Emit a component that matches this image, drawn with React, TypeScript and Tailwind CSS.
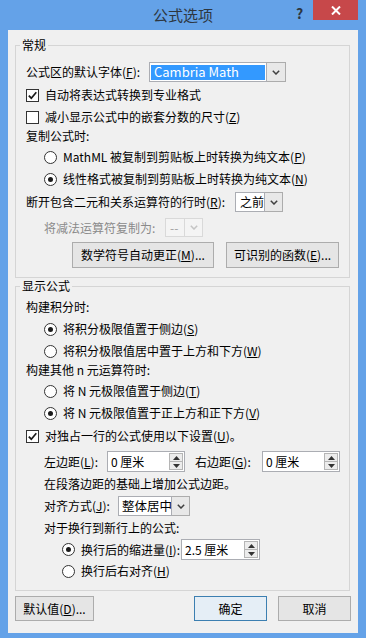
import type { ReactNode } from 'react';

function Chevron({ disabled }: { disabled?: boolean }) {
  return (
    <svg width="8" height="5" viewBox="0 0 8 5">
      <path d="M0.8 0.8 L4 4 L7.2 0.8" fill="none" stroke={disabled ? '#c4c4c4' : '#404040'} strokeWidth="1.5" />
    </svg>
  );
}

function Check({ checked, children }: { checked?: boolean; children: ReactNode }) {
  return (
    <div className="flex items-center h-[22px]">
      <span className="w-[13px] h-[13px] border border-[#333333] bg-white flex items-center justify-center shrink-0">
        {checked && (
          <svg width="11" height="11" viewBox="0 0 11 11">
            <path d="M1.8 5.6 L4.3 8.2 L9.3 2.2" fill="none" stroke="#1a1a1a" strokeWidth="1.7" />
          </svg>
        )}
      </span>
      <span className="ml-[6px]">{children}</span>
    </div>
  );
}

function Radio({ checked, children, className = '' }: { checked?: boolean; children: ReactNode; className?: string }) {
  return (
    <div className={`flex items-center ${className}`}>
      <span className="w-[13px] h-[13px] rounded-full border border-[#333333] bg-white flex items-center justify-center shrink-0">
        {checked && <span className="w-[5px] h-[5px] rounded-full bg-[#1a1a1a]" />}
      </span>
      <span className="ml-[6px]">{children}</span>
    </div>
  );
}

function Combo({ className, children, disabled, arrow = 'w-[18px]' }: { className: string; children: ReactNode; disabled?: boolean; arrow?: string }) {
  return (
    <div className={`flex h-full ${className}`}>
      <div className={`flex-1 min-w-0 flex items-center border overflow-hidden ${disabled ? 'border-[#d9d9d9] bg-[#f4f4f4] text-[#a0a0a0]' : 'border-[#abadb3] bg-white'}`}>
        {children}
      </div>
      <div className={`${arrow} shrink-0 flex items-center justify-center border border-l-0 ${disabled ? 'border-[#d9d9d9] bg-[#f4f4f4]' : 'border-[#acacac] bg-[#e8e8e8]'}`}>
        <Chevron disabled={disabled} />
      </div>
    </div>
  );
}

function Spin({ className, children }: { className: string; children: ReactNode }) {
  return (
    <div className={`flex h-full border border-[#abadb3] bg-white ${className}`}>
      <div className="flex-1 flex items-center pl-[3px]">{children}</div>
      <div className="w-[15px] flex flex-col py-[1px] pr-[1px]">
        <div className="flex-1 flex items-center justify-center bg-[#ececec] border border-[#b5b5b5]">
          <svg width="7" height="4" viewBox="0 0 7 4">
            <path d="M0 4 L3.5 0 L7 4Z" fill="#333333" />
          </svg>
        </div>
        <div className="flex-1 flex items-center justify-center bg-[#ececec] border border-t-0 border-[#b5b5b5]">
          <svg width="7" height="4" viewBox="0 0 7 4">
            <path d="M0 0 L3.5 4 L7 0Z" fill="#333333" />
          </svg>
        </div>
      </div>
    </div>
  );
}

function Btn({ className, children, primary }: { className: string; children: ReactNode; primary?: boolean }) {
  return (
    <div
      className={`flex items-center justify-center h-full border ${
        primary ? 'border-[#3c7fb1] bg-[#e5eef6]' : 'border-[#acacac] bg-[#e5e5e5]'
      } ${className}`}
    >
      {children}
    </div>
  );
}

export default function App() {
  return (
    <div className="w-[366px] h-[638px] bg-[#64a2e8] flex flex-col font-['Noto_Sans_CJK_SC',sans-serif] text-[12px] leading-[16px] text-black whitespace-nowrap select-none">
      {/* title bar */}
      <div className="h-[30px] shrink-0 relative flex items-center justify-center">
        <span className="text-[15px] text-[#2d3640]">公式选项</span>
        <span className="absolute left-[296px] top-[5px] text-[14px] font-bold text-[#2d3640]">?</span>
        <div className="absolute left-[313px] top-0 w-[45px] h-[20px] bg-[#c7484a] flex items-center justify-center">
          <svg width="10" height="9" viewBox="0 0 10 9">
            <path d="M1 0.5 L9 8.5 M9 0.5 L1 8.5" stroke="#ffffff" strokeWidth="2" />
          </svg>
        </div>
      </div>

      {/* client area */}
      <div className="mx-[8px] mb-[5px] flex-1 bg-[#f0f0f0] pt-[7px] px-[7px] flex flex-col">
        <fieldset className="border border-[#d5d5d5] mr-[1px] pl-[4px] pr-[4px] pt-[9px] pb-[9px] min-w-0">
          <legend className="px-[2px] leading-[16px]">常规</legend>
          <div className="pl-[6px] flex flex-col">
            <div className="flex items-center h-[20px]">
              <span className="w-[123px]">公式区的默认字体(<u>F</u>):</span>
              <Combo className="w-[137px]" arrow="w-[19px]">
                <div className="m-[1px] h-[15px] flex-1 bg-[#3399ff] text-white flex items-center pl-[3px] text-[13px]">Cambria Math</div>
              </Combo>
            </div>
            <div className="mt-[2px]">
              <Check checked>自动将表达式转换到专业格式</Check>
            </div>
            <Check>减小显示公式中的嵌套分数的尺寸(<u>Z</u>)</Check>
            <div className="h-[16px] flex items-center">复制公式时:</div>
            <Radio className="mt-[2px] h-[22px] pl-[18px]">MathML 被复制到剪贴板上时转换为纯文本(<u>P</u>)</Radio>
            <Radio checked className="h-[22px] pl-[18px]">线性格式被复制到剪贴板上时转换为纯文本(<u>N</u>)</Radio>
            <div className="mt-[2px] flex items-center h-[20px]">
              <span className="w-[209px]">断开包含二元和关系运算符的行时(<u>R</u>):</span>
              <Combo className="w-[48px]">
                <span className="pl-[4px]">之前</span>
              </Combo>
            </div>
            <div className="mt-[6px] flex items-center h-[19px] pl-[18px]">
              <span className="w-[121px] text-[#8a8a8a]">将减法运算符复制为:</span>
              <Combo className="w-[38px]" disabled>
                <span className="pl-[4px]">--</span>
              </Combo>
            </div>
            <div className="mt-[5px] flex h-[26px] pl-[46px] gap-[12px]">
              <Btn className="w-[142px]">数学符号自动更正(<u>M</u>)...</Btn>
              <Btn className="w-[113px]">可识别的函数(<u>E</u>)...</Btn>
            </div>
          </div>
        </fieldset>

        <fieldset className="border border-[#d5d5d5] mr-[1px] pl-[4px] pr-[4px] pt-[3px] pb-[8px] min-w-0">
          <legend className="px-[2px] leading-[16px]">显示公式</legend>
          <div className="pl-[6px] flex flex-col">
            <div className="h-[20px] flex items-center">构建积分时:</div>
            <Radio checked className="mt-[1px] h-[22px] pl-[18px]">将积分极限值置于侧边(<u>S</u>)</Radio>
            <Radio className="h-[22px] pl-[18px]">将积分极限值居中置于上方和下方(<u>W</u>)</Radio>
            <div className="h-[16px] flex items-center">构建其他 n 元运算符时:</div>
            <Radio className="mt-[2px] h-[22px] pl-[18px]">将 N 元极限值置于侧边(<u>T</u>)</Radio>
            <Radio checked className="h-[22px] pl-[18px]">将 N 元极限值置于正上方和正下方(<u>V</u>)</Radio>
            <div className="mt-[1px]">
              <Check checked>对独占一行的公式使用以下设置(<u>U</u>)。</Check>
            </div>
            <div className="mt-[4px] flex items-center h-[21px] pl-[18px]">
              <span className="w-[63px]">左边距(<u>L</u>):</span>
              <Spin className="w-[78px]">0 厘米</Spin>
              <span className="ml-[10px] w-[67px]">右边距(<u>G</u>):</span>
              <Spin className="w-[78px]">0 厘米</Spin>
            </div>
            <div className="mt-[2px] h-[20px] flex items-center pl-[18px]">在段落边距的基础上增加公式边距。</div>
            <div className="mt-[2px] flex items-center h-[20px] pl-[18px]">
              <span className="w-[74px]">对齐方式(<u>J</u>):</span>
              <Combo className="w-[72px]">
                <span className="pl-[3px] text-[12.5px]">整体居中</span>
              </Combo>
            </div>
            <div className="mt-[2px] h-[20px] flex items-center pl-[18px]">对于换行到新行上的公式:</div>
            <div className="mt-[1px] flex items-center h-[21px] pl-[36px]">
              <Radio checked className="w-[119px]">换行后的缩进量(<u>I</u>):</Radio>
              <Spin className="w-[79px]">2.5 厘米</Spin>
            </div>
            <Radio className="h-[22px] pl-[36px]">换行后右对齐(<u>H</u>)</Radio>
          </div>
        </fieldset>

        <div className="mt-[5px] flex h-[25px]">
          <Btn className="w-[79px]">默认值(<u>D</u>)...</Btn>
          <div className="flex-1" />
          <Btn primary className="w-[73px]">确定</Btn>
          <Btn className="w-[73px] ml-[11px]">取消</Btn>
        </div>
      </div>
    </div>
  );
}
